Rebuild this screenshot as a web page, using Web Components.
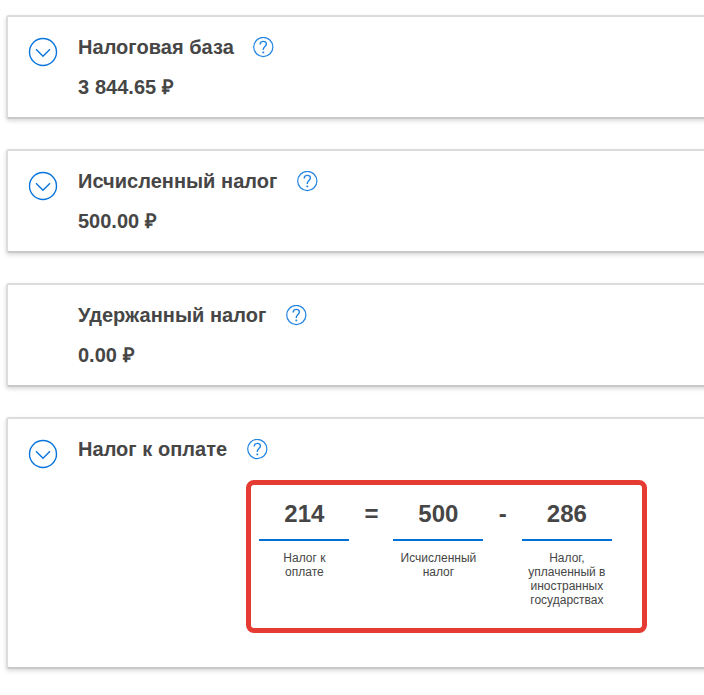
<!DOCTYPE html>
<html lang="ru">
<head>
<meta charset="utf-8">
<title>Налог к оплате</title>
<style>
body { margin: 0; background: #fff; width: 704px; height: 695px; overflow: hidden; font-family: "Liberation Sans", Arial, sans-serif; color: #464646; }
</style>
</head>
<body>
<tax-page>
  <tax-card toggle heading="Налоговая база"><tax-amount slot="amount">3 844.65 ₽</tax-amount></tax-card>
  <tax-card toggle heading="Исчисленный налог"><tax-amount slot="amount">500.00 ₽</tax-amount></tax-card>
  <tax-card heading="Удержанный налог"><tax-amount slot="amount">0.00 ₽</tax-amount></tax-card>
  <tax-card tall toggle heading="Налог к оплате">
    <tax-formula>
      <tax-term value="214">Налог к<br>оплате</tax-term>
      <tax-operator style="width:44px">=</tax-operator>
      <tax-term value="500">Исчисленный<br>налог</tax-term>
      <tax-operator style="width:38.5px">-</tax-operator>
      <tax-term value="286">Налог,<br>уплаченный в<br>иностранных<br>государствах</tax-term>
    </tax-formula>
  </tax-card>
</tax-page>
<script>
const define = (name, html, setup) => customElements.define(name, class extends HTMLElement {
  connectedCallback() {
    if (this.shadowRoot) return;
    this.attachShadow({ mode: 'open' }).innerHTML = html;
    if (setup) setup(this, this.shadowRoot);
  }
});

define('tax-page', `<style>
  :host { display: flex; flex-direction: column; gap: 30px; padding: 15px 0 0 6px; box-sizing: border-box; }
</style><slot></slot>`);

define('toggle-icon', `<style>
  :host { display: block; width: 30px; height: 30px; }
  svg { display: block; }
</style><svg width="30" height="30" viewBox="0 0 30 30" fill="none" stroke="#0a75dc" stroke-width="1.4">
  <circle cx="15" cy="15" r="13.5"/><path d="M8 12.2L15 19.2L22 12.2"/></svg>`);

define('help-icon', `<style>
  :host { display: block; width: 21px; height: 21px; }
  svg { display: block; }
</style><svg width="21" height="21" viewBox="0 0 21 21" fill="none" stroke="#2284e2" stroke-width="1.2">
  <circle cx="10.3" cy="10" r="9.6"/>
  <path stroke-width="1.4" d="M7.2 7.4C7.2 5.5 8.4 4.4 10.3 4.4S13.4 5.5 13.4 7.1C13.4 9.4 10.3 9.6 10.3 12.4V13"/>
  <path stroke-width="1.7" d="M9.4 15.4H11.2"/></svg>`);

define('tax-amount', `<style>
  :host { display: block; font-size: 20px; font-weight: bold; line-height: 24px; word-spacing: .3px; }
</style><slot></slot>`);

define('tax-card', `<style>
  :host { display: grid; grid-template-columns: 50px 1fr; box-sizing: border-box; height: 104px; width: 720px;
    border: 2px solid #dcdcdc; border-bottom-color: #c9c9c9; border-radius: 3px; padding: 18px 0 0 20px;
    box-shadow: 0 2px 4px rgba(0,0,0,.15); background: #fff; }
  :host([tall]) { height: 252px; }
  toggle-icon { margin-top: 2px; }
  header { display: flex; align-items: center; gap: 19.6px; height: 24px; }
  h2 { margin: 0; font-size: 20px; line-height: 24px; font-weight: bold; white-space: nowrap; letter-spacing: .03px; }
  .body { padding-top: 16px; }
</style><div class="side"></div><div><header><h2></h2><help-icon></help-icon></header>
<div class="body"><slot name="amount"></slot><slot></slot></div></div>`, (el, root) => {
  root.querySelector('h2').textContent = el.getAttribute('heading');
  if (el.hasAttribute('toggle')) root.querySelector('.side').append(document.createElement('toggle-icon'));
});

define('tax-formula', `<style>
  :host { display: flex; align-items: flex-start; box-sizing: border-box; width: 401px; height: 153px;
    margin: 3px 0 0 168px; padding: 14px 0 0 8.4px; border: 5px solid #e53b33; border-radius: 8px; }
</style><slot></slot>`);

define('tax-term', `<style>
  :host { display: block; width: 90px; text-align: center; }
  .value { height: 40px; box-sizing: content-box; border-bottom: 2px solid #0070d6; font-size: 24px; font-weight: bold; line-height: 29px; }
  .label { margin-top: 10px; font-size: 12px; line-height: 14px; white-space: nowrap; }
</style><div class="value"></div><div class="label"><slot></slot></div>`, (el, root) => {
  root.querySelector('.value').textContent = el.getAttribute('value');
});

define('tax-operator', `<style>
  :host { display: block; text-align: center; font-size: 24px; font-weight: bold; line-height: 29px; }
</style><slot></slot>`);
</script>
</body>
</html>
